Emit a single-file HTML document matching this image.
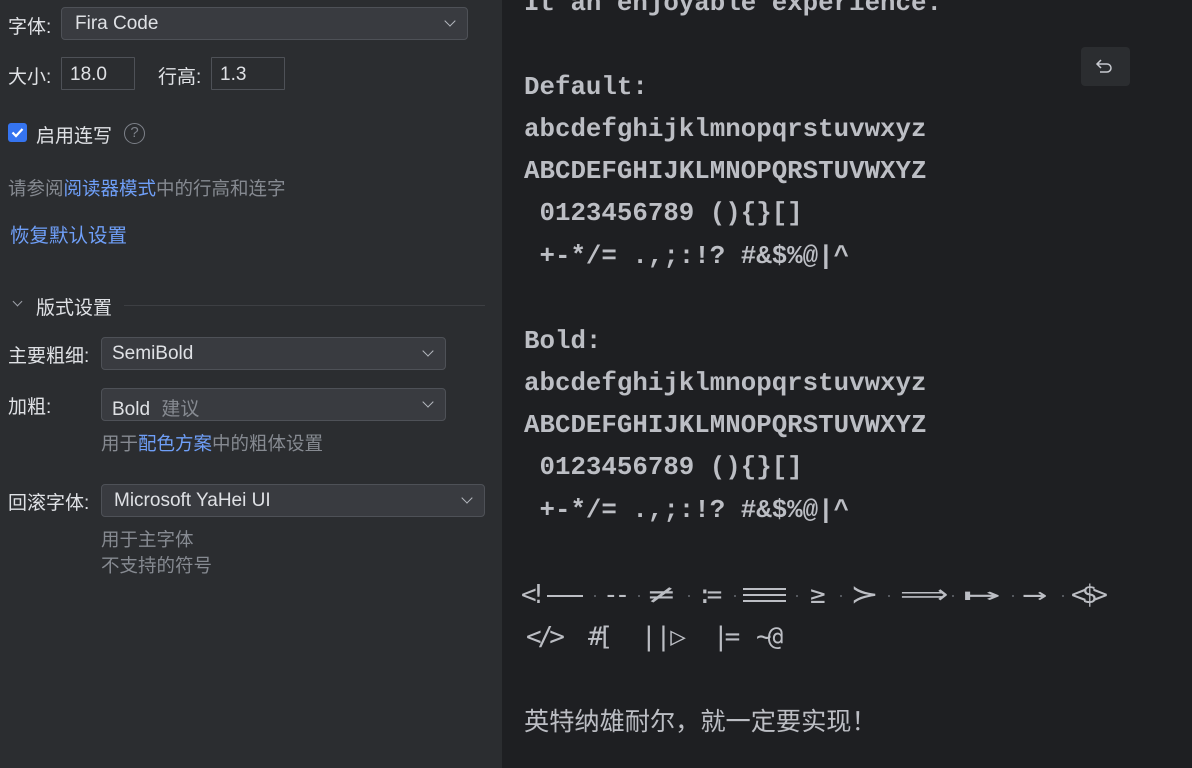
<!DOCTYPE html>
<html><head><meta charset="utf-8"><style>
*{margin:0;padding:0;box-sizing:border-box}
body{width:1192px;height:768px;overflow:hidden;background:#1e1f22;font-family:"Liberation Sans","Noto Sans CJK SC",sans-serif;position:relative}
#left{position:absolute;left:0;top:0;width:502px;height:768px;background:#2b2d30;color:#dfe1e5;font-size:19px}
.a{position:absolute;white-space:nowrap}
.box{position:absolute;border:1px solid #4e5157;border-radius:4px;background:#2b2d30}
.dd{background:#393b40;border-color:#4e5157}
.chev{position:absolute;width:8px;height:8px;border-right:1.5px solid #b4b8bf;border-bottom:1.5px solid #b4b8bf;transform:rotate(45deg)}
.gray{color:#868a91;font-size:18.5px}
.link{color:#6f9ff8}
#right{position:absolute;left:502px;top:0;width:690px;height:768px;font-family:"Liberation Mono","Noto Sans CJK SC",monospace;font-size:25.8px;color:#bcbec4;font-weight:bold}
.ln{position:absolute;left:22px;white-space:pre;line-height:30px}
.g{position:absolute;white-space:pre;font-weight:normal;font-family:"DejaVu Sans Mono","Liberation Mono",monospace;font-size:26px;line-height:30px;transform-origin:left}
.dot{position:absolute;width:2px;height:2px;background:#55585e;top:595px}
</style></head><body>
<div id="left">
<div class="a" style="left:8px;top:12px">字体:</div>
<div class="box dd" style="left:61px;top:7px;width:407px;height:33px"><span class="a" style="left:13px;top:5px">Fira Code</span><div class="chev" style="left:384px;top:9px"></div></div>
<div class="a" style="left:8px;top:62px">大小:</div>
<div class="box" style="left:61px;top:57px;width:74px;height:33px;border-radius:1px"><span class="a" style="left:8px;top:6px">18.0</span></div>
<div class="a" style="left:158px;top:62px">行高:</div>
<div class="box" style="left:211px;top:57px;width:74px;height:33px;border-radius:1px"><span class="a" style="left:8px;top:6px">1.3</span></div>
<div class="a" style="left:8px;top:123px;width:19px;height:19px;background:#3574f0;border-radius:3px"><svg width="19" height="19"><path d="M4.5 9.5l3.5 3.5 6.5-7" stroke="#fff" stroke-width="2.2" fill="none"/></svg></div>
<div class="a" style="left:36px;top:121px">启用连写</div>
<div class="a" style="left:124px;top:123px;width:21px;height:21px;border:1.5px solid #7d8189;border-radius:50%;color:#7d8189;font-size:15px;text-align:center;line-height:18px">?</div>
<div class="a gray" style="left:8px;top:175px">请参阅<span class="link">阅读器模式</span>中的行高和连字</div>
<div class="a link" style="left:10px;top:219px;font-size:19.5px">恢复默认设置</div>
<div class="chev" style="left:14px;top:298px;width:7px;height:7px;border-color:#9da0a8"></div>
<div class="a" style="left:36px;top:293px">版式设置</div>
<div class="a" style="left:124px;top:305px;width:361px;height:1px;background:#3d3f43"></div>
<div class="a" style="left:8px;top:341px">主要粗细:</div>
<div class="box dd" style="left:101px;top:337px;width:345px;height:33px"><span class="a" style="left:10px;top:5px">SemiBold</span><div class="chev" style="left:322px;top:9px"></div></div>
<div class="a" style="left:8px;top:392px">加粗:</div>
<div class="box dd" style="left:101px;top:388px;width:345px;height:33px"><span class="a" style="left:10px;top:5px">Bold <span style="color:#868a91;margin-left:6px">建议</span></span><div class="chev" style="left:322px;top:9px"></div></div>
<div class="a gray" style="left:101px;top:430px">用于<span class="link">配色方案</span>中的粗体设置</div>
<div class="a" style="left:8px;top:488px">回滚字体:</div>
<div class="box dd" style="left:101px;top:484px;width:384px;height:33px"><span class="a" style="left:12px;top:5px">Microsoft YaHei UI</span><div class="chev" style="left:361px;top:9px"></div></div>
<div class="a gray" style="left:101px;top:526px">用于主字体</div>
<div class="a gray" style="left:101px;top:552px">不支持的符号</div>
</div>
<div id="right">
<div class="ln" style="top:-11px">It an enjoyable experience.</div>
<div class="ln" style="top:73px">Default:</div>
<div class="ln" style="top:115px">abcdefghijklmnopqrstuvwxyz</div>
<div class="ln" style="top:157px">ABCDEFGHIJKLMNOPQRSTUVWXYZ</div>
<div class="ln" style="top:199px"> 0123456789 (){}[]</div>
<div class="ln" style="top:242px"> +-*/= .,;:!? #&amp;$%@|^</div>
<div class="ln" style="top:327px">Bold:</div>
<div class="ln" style="top:369px">abcdefghijklmnopqrstuvwxyz</div>
<div class="ln" style="top:411px">ABCDEFGHIJKLMNOPQRSTUVWXYZ</div>
<div class="ln" style="top:453px"> 0123456789 (){}[]</div>
<div class="ln" style="top:496px"> +-*/= .,;:!? #&amp;$%@|^</div>
<div class="g" style="top:580px;left:19px;letter-spacing:-6px">&lt;!</div>
<div class="g" style="left:45px;width:36px;height:2px;background:#bcbec4;top:595px"></div>
<div class="g" style="top:580px;left:101px;letter-spacing:-4px">--</div>
<div class="g" style="top:580px;left:146px;transform:scaleX(1.7)">≠</div>
<div class="g" style="top:580px;left:195px;letter-spacing:-6px">:=</div>
<div class="g" style="top:588px;left:241px;width:43px;height:14px;border-top:2px solid #bcbec4;border-bottom:2px solid #bcbec4"></div>
<div class="g" style="top:594px;left:241px;width:43px;height:2px;background:#bcbec4"></div>
<div class="g" style="top:580px;left:308px">≥</div>
<div class="g" style="top:580px;left:350px;transform:scaleX(1.6)">≻</div>
<div class="g" style="top:580px;left:398px;transform:scaleX(1.3)">⟹</div>
<div class="g" style="top:580px;left:461px;transform:scaleX(2.4)">↦</div>
<div class="g" style="top:580px;left:520px;transform:scaleX(1.6)">→</div>
<div class="g" style="top:580px;left:569px;letter-spacing:-5px">&lt;$&gt;</div>
<div class="dot" style="left:92px"></div><div class="dot" style="left:136px"></div><div class="dot" style="left:186px"></div><div class="dot" style="left:232px"></div><div class="dot" style="left:294px"></div><div class="dot" style="left:338px"></div><div class="dot" style="left:386px"></div><div class="dot" style="left:450px"></div><div class="dot" style="left:510px"></div><div class="dot" style="left:560px"></div>
<div class="g" style="top:622px;left:24px;letter-spacing:-4px">&lt;/&gt;</div>
<div class="g" style="top:622px;left:86px;letter-spacing:-6px">#[</div>
<div class="g" style="top:622px;left:139px;letter-spacing:-1px">||▷</div>
<div class="g" style="top:622px;left:211px;letter-spacing:-4px">|=</div>
<div class="g" style="top:622px;left:254px;letter-spacing:-4px">~@</div>
<div class="ln" style="top:705px;font-family:'Noto Sans CJK SC',sans-serif;font-weight:normal;font-size:25.2px">英特纳雄耐尔，就一定要实现！</div>
<div class="a" style="left:579px;top:47px;width:49px;height:39px;background:#2b2d30;border-radius:4px"><svg width="49" height="39"><path d="M20 13l-4 4 4 4M16 17h10a4 4 0 0 1 0 8h-7" stroke="#c8cad0" stroke-width="1.5" fill="none"/></svg></div>
</div>
</body></html>
